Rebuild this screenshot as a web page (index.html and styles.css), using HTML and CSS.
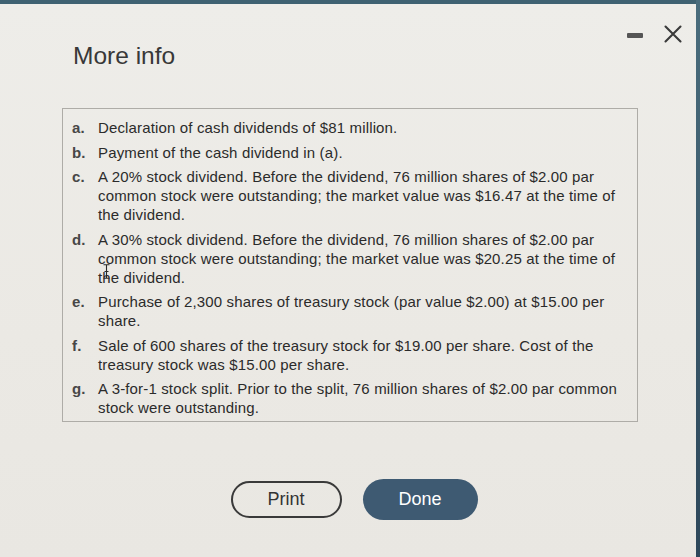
FILE: index.html
```html
<!DOCTYPE html>
<html lang="en">
<head>
<meta charset="utf-8">
<title>More info</title>
<link rel="stylesheet" href="styles.css">
</head>
<body>
<div class="page">
  <div class="dialog">
    <div class="header">
      <h1 class="title">More info</h1>
      <div class="controls">
        <span class="minimize" aria-label="Minimize"></span>
        <svg class="close" width="18" height="18" viewBox="0 0 18 18" aria-label="Close">
          <path d="M1.5 1.5 L16.5 16.5 M16.5 1.5 L1.5 16.5" stroke="#3a3a3a" stroke-width="2.1" fill="none" stroke-linecap="round"/>
        </svg>
      </div>
    </div>
    <div class="info-box">
      <ol class="items">
        <li class="item"><span class="label">a.</span><span class="text">Declaration of cash dividends of $81 million.</span></li>
        <li class="item"><span class="label">b.</span><span class="text">Payment of the cash dividend in (a).</span></li>
        <li class="item"><span class="label">c.</span><span class="text">A 20% stock dividend. Before the dividend, 76 million shares of $2.00 par common stock were outstanding; the market value was $16.47 at the time of the dividend.</span></li>
        <li class="item"><span class="label">d.</span><span class="text">A 30% stock dividend. Before the dividend, 76 million shares of $2.00 par common stock were outstanding; the market value was $20.25 at the time of the dividend.</span></li>
        <li class="item"><span class="label">e.</span><span class="text">Purchase of 2,300 shares of treasury stock (par value $2.00) at $15.00 per share.</span></li>
        <li class="item"><span class="label">f.</span><span class="text">Sale of 600 shares of the treasury stock for $19.00 per share. Cost of the treasury stock was $15.00 per share.</span></li>
        <li class="item"><span class="label">g.</span><span class="text">A 3-for-1 stock split. Prior to the split, 76 million shares of $2.00 par common stock were outstanding.</span></li>
      </ol>
      <svg class="ibeam" width="7" height="15" viewBox="0 0 7 15" aria-hidden="true">
        <path d="M0.5 0.8 H3.5 M3.5 0.8 H6.5 M3.5 0.8 V14.2 M0.5 14.2 H6.5 M1.5 7.5 H5.5" stroke="#2a2a2a" stroke-width="1.1" fill="none"/>
      </svg>
    </div>
    <div class="actions">
      <button class="btn btn-print" type="button">Print</button>
      <button class="btn btn-done" type="button">Done</button>
    </div>
  </div>
  <div class="edge"></div>
</div>
</body>
</html>
```
FILE: styles.css
```css
* { box-sizing: border-box; }
html, body { margin: 0; padding: 0; }
body {
  width: 700px;
  height: 557px;
  overflow: hidden;
  background: #ebe9e4;
  font-family: "Liberation Sans", Arial, sans-serif;
  color: #2e2e2e;
}
.page {
  display: flex;
  width: 700px;
  height: 557px;
}
.dialog {
  flex: 1;
  display: flex;
  flex-direction: column;
  border-top: 4px solid #3f6272;
  background: linear-gradient(180deg, #eeede9 0%, #ebe9e4 60%, #e9e7e2 100%);
}
.edge {
  width: 4px;
  background: linear-gradient(180deg, #4a6d7d 0%, #2d475a 100%);
}
.header {
  display: flex;
  justify-content: space-between;
  align-items: flex-start;
  padding: 0 14px 0 73px;
}
.title {
  margin: 38px 0 0;
  font-size: 24.5px;
  line-height: 28px;
  font-weight: normal;
  color: #383838;
}
.controls {
  display: flex;
  align-items: center;
  gap: 21px;
  margin-top: 21px;
}
.minimize {
  display: block;
  width: 16px;
  height: 5px;
  border-radius: 1px;
  background: #555;
  margin-top: 3px;
}
.close { display: block; }
.info-box {
  position: relative;
  margin: 38px 0 0 62px;
  width: 576px;
  border: 1.5px solid #aeaca7;
  padding: 9px 14px 4px 9px;
}
.items {
  list-style: none;
  margin: 0;
  padding: 0;
  display: flex;
  flex-direction: column;
  gap: 5.5px;
}
.item {
  display: flex;
  font-size: 15px;
  letter-spacing: 0.15px;
  line-height: 19px;
}
.label {
  flex: 0 0 26px;
  font-weight: bold;
  color: #474747;
}
.text { flex: 1; color: #2b2b2b; }
.ibeam {
  position: absolute;
  left: 40px;
  top: 155px;
}
.actions {
  display: flex;
  justify-content: center;
  align-items: center;
  gap: 21px;
  margin: 57px 0 0 12px;
}
.btn {
  font-family: "Liberation Sans", Arial, sans-serif;
  font-size: 18px;
  border-radius: 999px;
  cursor: pointer;
}
.btn-print {
  width: 111px;
  height: 37px;
  background: transparent;
  border: 2px solid #3a3a3a;
  color: #333;
}
.btn-done {
  width: 115px;
  height: 41px;
  background: #3e5a72;
  border: none;
  color: #fff;
}
```
